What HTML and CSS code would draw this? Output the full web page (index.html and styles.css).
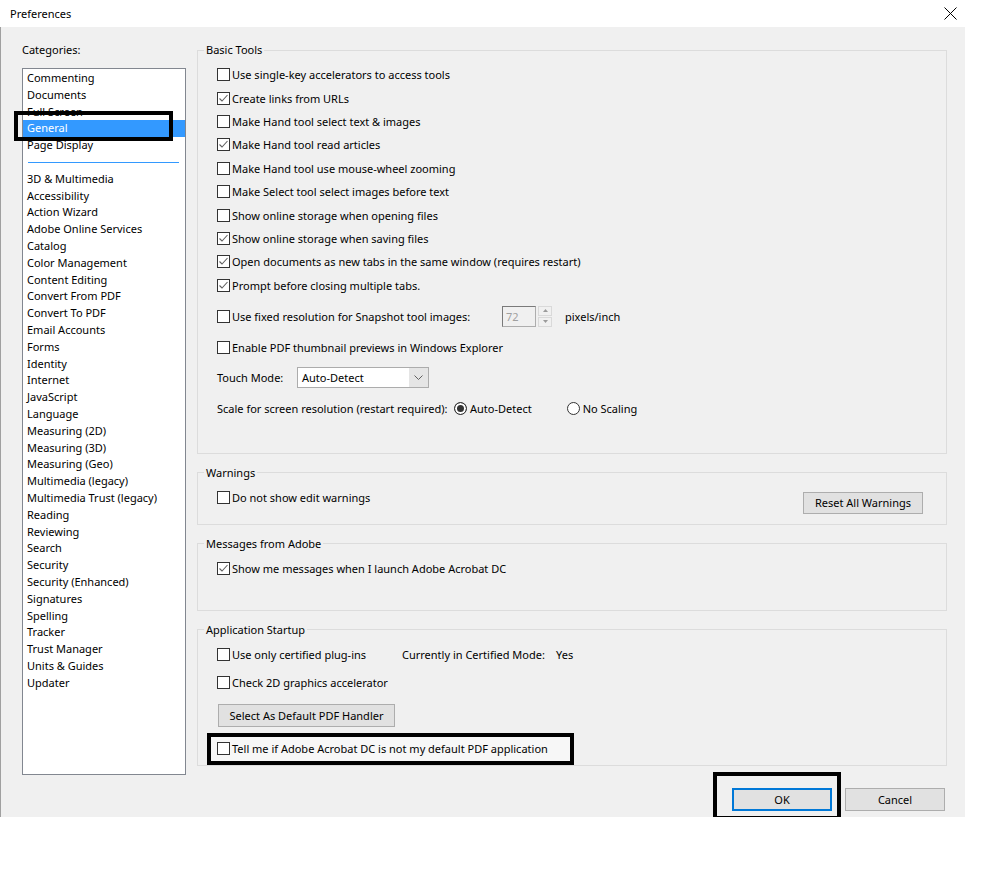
FILE: index.html
```html
<!DOCTYPE html>
<html lang="en">
<head>
    <meta charset="UTF-8">
    <meta name="viewport" content="width=device-width, initial-scale=1.0">
    <title>Preferences</title>
    <link rel="stylesheet" href="styles.css">
</head>
<body>
<div class="dialog">
    <div class="titlebar">
        <span>Preferences</span>
        <svg class="close" width="13" height="13" viewBox="0 0 13 13"><path d="M0.5 0.5 L12.5 12.5 M12.5 0.5 L0.5 12.5" stroke="#000" stroke-width="1" fill="none"/></svg>
    </div>

    <div class="content">
        <div class="main">
            <div class="categories">
                <div class="cat-label">Categories:</div>
                <ul class="cat-list">
                    <li>Commenting</li>
                    <li>Documents</li>
                    <li>Full Screen</li>
                    <li class="selected marked">General</li>
                    <li>Page Display</li>
                    <li class="sep"><span></span></li>
                    <li>3D &amp; Multimedia</li>
                    <li>Accessibility</li>
                    <li>Action Wizard</li>
                    <li>Adobe Online Services</li>
                    <li>Catalog</li>
                    <li>Color Management</li>
                    <li>Content Editing</li>
                    <li>Convert From PDF</li>
                    <li>Convert To PDF</li>
                    <li>Email Accounts</li>
                    <li>Forms</li>
                    <li>Identity</li>
                    <li>Internet</li>
                    <li>JavaScript</li>
                    <li>Language</li>
                    <li>Measuring (2D)</li>
                    <li>Measuring (3D)</li>
                    <li>Measuring (Geo)</li>
                    <li>Multimedia (legacy)</li>
                    <li>Multimedia Trust (legacy)</li>
                    <li>Reading</li>
                    <li>Reviewing</li>
                    <li>Search</li>
                    <li>Security</li>
                    <li>Security (Enhanced)</li>
                    <li>Signatures</li>
                    <li>Spelling</li>
                    <li>Tracker</li>
                    <li>Trust Manager</li>
                    <li>Units &amp; Guides</li>
                    <li>Updater</li>
                </ul>
            </div>

            <div class="panel">
                <fieldset class="group">
                    <legend>Basic Tools</legend>
                    <div class="rows basic">
                        <label class="check"><span class="box"></span>Use single-key accelerators to access tools</label>
                        <label class="check"><span class="box"><svg viewBox="0 0 11 11"><polyline points="1.5,5.5 4,8 9.5,2"/></svg></span>Create links from URLs</label>
                        <label class="check"><span class="box"></span>Make Hand tool select text &amp; images</label>
                        <label class="check"><span class="box"><svg viewBox="0 0 11 11"><polyline points="1.5,5.5 4,8 9.5,2"/></svg></span>Make Hand tool read articles</label>
                        <label class="check"><span class="box"></span>Make Hand tool use mouse-wheel zooming</label>
                        <label class="check"><span class="box"></span>Make Select tool select images before text</label>
                        <label class="check"><span class="box"></span>Show online storage when opening files</label>
                        <label class="check"><span class="box"><svg viewBox="0 0 11 11"><polyline points="1.5,5.5 4,8 9.5,2"/></svg></span>Show online storage when saving files</label>
                        <label class="check"><span class="box"><svg viewBox="0 0 11 11"><polyline points="1.5,5.5 4,8 9.5,2"/></svg></span>Open documents as new tabs in the same window (requires restart)</label>
                        <label class="check"><span class="box"><svg viewBox="0 0 11 11"><polyline points="1.5,5.5 4,8 9.5,2"/></svg></span>Prompt before closing multiple tabs.</label>

                        <div class="line first">
                            <label class="check snap"><span class="box"></span>Use fixed resolution for Snapshot tool images:</label>
                            <div class="num">72</div>
                            <div class="spin">
                                <span><svg width="5" height="3" viewBox="0 0 5 3"><path d="M2.5 0 L5 3 L0 3 Z" fill="#9a9a9a"/></svg></span>
                                <span><svg width="5" height="3" viewBox="0 0 5 3"><path d="M0 0 L5 0 L2.5 3 Z" fill="#9a9a9a"/></svg></span>
                            </div>
                            <span class="unit">pixels/inch</span>
                        </div>
                        <div class="line">
                            <label class="check"><span class="box"></span>Enable PDF thumbnail previews in Windows Explorer</label>
                        </div>
                        <div class="line short">
                            <span class="touch-label">Touch Mode:</span>
                            <div class="select">
                                <span>Auto-Detect</span>
                                <span class="arrow"><svg width="9" height="5" viewBox="0 0 9 5"><polyline points="0.5,0.5 4.5,4.5 8.5,0.5" fill="none" stroke="#606060"/></svg></span>
                            </div>
                        </div>
                        <div class="line">
                            <span class="scale-label">Scale for screen resolution (restart required):</span>
                            <label class="radio"><span class="dot on"></span>Auto-Detect</label>
                            <label class="radio no-scale"><span class="dot"></span>No Scaling</label>
                        </div>
                    </div>
                </fieldset>

                <fieldset class="group">
                    <legend>Warnings</legend>
                    <div class="rows warnings">
                        <label class="check"><span class="box"></span>Do not show edit warnings</label>
                        <button class="btn reset">Reset All Warnings</button>
                    </div>
                </fieldset>

                <fieldset class="group">
                    <legend>Messages from Adobe</legend>
                    <div class="rows messages">
                        <label class="check"><span class="box"><svg viewBox="0 0 11 11"><polyline points="1.5,5.5 4,8 9.5,2"/></svg></span>Show me messages when I launch Adobe Acrobat DC</label>
                    </div>
                </fieldset>

                <fieldset class="group last">
                    <legend>Application Startup</legend>
                    <div class="rows startup">
                        <div class="certified">
                            <label class="check plugins"><span class="box"></span>Use only certified plug-ins</label>
                            <span class="mode">Currently in Certified Mode:</span>
                            <span>Yes</span>
                        </div>
                        <label class="check"><span class="box"></span>Check 2D graphics accelerator</label>
                        <button class="btn handler">Select As Default PDF Handler</button>
                        <label class="check marked-row"><span class="box"></span>Tell me if Adobe Acrobat DC is not my default PDF application</label>
                    </div>
                </fieldset>
            </div>
        </div>

        <div class="footer">
            <button class="btn ok">OK</button>
            <button class="btn">Cancel</button>
        </div>
    </div>
</div>
</body>
</html>
```

FILE: styles.css
```css
* { box-sizing: border-box; }
body { margin: 0; background: #fff; font-family: "Noto Sans", "Open Sans", sans-serif; font-size: 11px; color: #000; white-space: nowrap; }

.dialog { width: 965px; }
.titlebar { height: 27px; display: flex; align-items: center; justify-content: space-between; padding: 0 8px 0 10px; background: #fff; }
.close { display: block; }

.content { background: #f0f0f0; border-left: 1px solid #a0a0a0; padding: 15px 18px 6px 21px; }
.main { display: flex; gap: 11px; align-items: flex-start; }

/* categories list */
.categories { width: 164px; }
.cat-label { height: 16px; line-height: 16px; margin-bottom: 10px; }
.cat-list { list-style: none; margin: 0; padding: 1px 0; height: 707px; background: #fff; border: 1px solid #828790; }
.cat-list li { height: 16.8px; line-height: 16.8px; padding-left: 4px; position: relative; }
.cat-list li.selected { background: #3399ff; color: #fff; }
.cat-list li.sep { padding: 8px 6px 0 5px; }
.cat-list li.sep span { display: block; height: 1px; background: #3399ff; }
.cat-list li.marked::after { content: ""; position: absolute; left: -9px; top: -9px; right: 12px; bottom: -4px; border: 4px solid #000; }

/* right panel */
.panel { width: 750px; }
.group { margin: 0 0 11px; padding: 0 6px; border: 1px solid #dcdcdc; min-width: 0; }
.group.last { margin-bottom: 0; }
.group legend { padding: 0 2px; line-height: 16px; }
.rows { padding-left: 13px; }

.check { display: flex; align-items: center; height: 23.4px; }
.box { width: 13px; height: 13px; border: 1px solid #333; background: #fff; margin-right: 2px; flex: none; }
.box svg { display: block; width: 11px; height: 11px; fill: none; stroke: #606060; stroke-width: 1.1; }

.basic { padding-top: 5px; padding-bottom: 29px; }
.line { display: flex; align-items: center; height: 31px; }
.line.first { margin-top: 4px; }
.line.short { height: 30px; }
.snap { width: 285px; }
.num { width: 34px; height: 21px; border: 1px solid #adadad; border-top-color: #7a7a7a; border-left-color: #7a7a7a; color: #a0a0a0; padding-left: 3px; line-height: 19px; }
.spin { display: flex; flex-direction: column; gap: 1px; margin-left: 2px; }
.spin span { display: flex; align-items: center; justify-content: center; width: 14px; height: 10px; border: 1px solid #d9d9d9; }
.spin svg { display: block; }
.unit { margin-left: 13px; }
.touch-label { width: 80px; }
.select { display: flex; width: 132px; height: 21px; border: 1px solid #acacac; background: #fff; }
.select span { flex: 1; padding-left: 4px; line-height: 19px; }
.select .arrow { flex: none; width: 19px; padding: 0; display: flex; align-items: center; justify-content: center; background: #e5e5e5; }
.scale-label { width: 237px; }
.radio { display: flex; align-items: center; }
.dot { width: 13px; height: 13px; border: 1px solid #333; border-radius: 50%; background: #fff; margin-right: 3px; }
.dot.on { background: #333; box-shadow: inset 0 0 0 2px #fff; }
.no-scale { margin-left: 35px; }

.warnings { display: flex; justify-content: space-between; align-items: flex-start; padding: 5px 17px 10px 13px; }
.warnings .check { height: 23px; }
.messages { padding-top: 5px; padding-bottom: 30px; }
.messages .check { height: 23px; }

.startup { padding-top: 5px; }
.startup .check { height: 23px; }
.certified { display: flex; align-items: center; height: 23px; margin-bottom: 5px; }
.plugins { width: 185px; }
.mode { width: 154px; }

.btn { font-family: inherit; font-size: 11px; color: #000; background: #e1e1e1; border: 1px solid #adadad; padding: 0; height: 23px; }
.reset { width: 120px; height: 22px; margin-top: 6px; }
.handler { display: block; width: 177px; margin: 10px 0 0 1px; }
.startup .marked-row { display: inline-flex; height: 32px; margin: 6px 0 0 -10px; padding: 0 22px 0 6px; border: 4px solid #000; background: #f7f7f7; }

.footer { display: flex; justify-content: flex-end; gap: 13px; padding: 13px 2px 0 0; }
.footer .btn { width: 100px; }
.ok { position: relative; border: 2px solid #0078d7; }
.ok::after { content: ""; position: absolute; left: -21px; top: -18px; right: -11px; bottom: -11px; border: 4px solid #000; }
```
